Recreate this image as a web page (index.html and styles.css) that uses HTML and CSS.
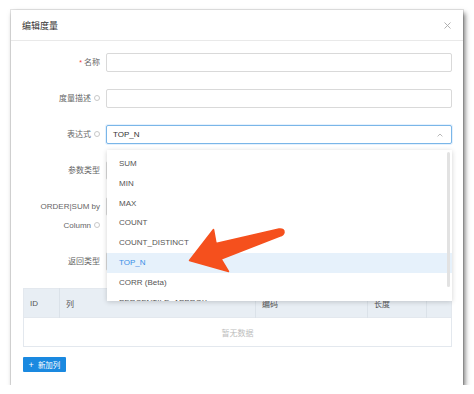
FILE: index.html
```html
<!DOCTYPE html>
<html lang="zh">
<head>
    <meta charset="UTF-8">
    <title>编辑度量</title>
    <link rel="stylesheet" href="styles.css">
</head>
<body>
    <div class="modal">
        <div class="modal-header">
            <span class="modal-title">编辑度量</span>
            <svg class="close-icon" width="7" height="7" viewBox="0 0 7 7">
                <path d="M0.5 0.5 L6.5 6.5 M6.5 0.5 L0.5 6.5" stroke="#a8a8a8" stroke-width="0.9"/>
            </svg>
        </div>
        <div class="modal-body">
            <div class="form-item">
                <div class="form-label"><span class="required">*</span>名称</div>
                <input type="text" class="form-input">
            </div>
            <div class="form-item">
                <div class="form-label">度量描述<i class="help-icon"></i></div>
                <input type="text" class="form-input">
            </div>
            <div class="form-item">
                <div class="form-label">表达式<i class="help-icon"></i></div>
                <div class="select-wrap">
                    <div class="form-select is-open">
                        <span>TOP_N</span>
                        <svg class="caret" width="6" height="4" viewBox="0 0 6 4">
                            <path d="M0.6 3.4 L3 1 L5.4 3.4" fill="none" stroke="#b0b0b0" stroke-width="0.9"/>
                        </svg>
                    </div>
                    <div class="select-dropdown">
                        <ul class="option-list">
                            <li>SUM</li>
                            <li>MIN</li>
                            <li>MAX</li>
                            <li>COUNT</li>
                            <li>COUNT_DISTINCT</li>
                            <li class="active">TOP_N</li>
                            <li>CORR (Beta)</li>
                            <li>PERCENTILE_APPROX</li>
                        </ul>
                        <div class="scroll-thumb"></div>
                    </div>
                </div>
            </div>
            <div class="form-item">
                <div class="form-label">参数类型</div>
                <div class="form-select"></div>
            </div>
            <div class="form-item">
                <div class="form-label">ORDER|SUM by<br>Column<i class="help-icon"></i></div>
                <div class="form-select"></div>
            </div>
            <div class="form-item">
                <div class="form-label">返回类型</div>
                <div class="form-select"></div>
            </div>

            <table class="column-table">
                <thead>
                    <tr>
                        <th class="col-id">ID</th>
                        <th class="col-name">列</th>
                        <th class="col-code">编码</th>
                        <th class="col-len">长度</th>
                        <th class="col-op"></th>
                    </tr>
                </thead>
                <tbody>
                    <tr>
                        <td colspan="5" class="empty-cell">暂无数据</td>
                    </tr>
                </tbody>
            </table>

            <button type="button" class="add-btn"><span class="plus">+</span>新加列</button>
        </div>
    </div>

    <!-- annotation arrow drawn over the screenshot -->
    <svg class="pointer-arrow" width="474" height="394" viewBox="0 0 474 394">
        <path d="M189.5 260.5 L213.5 229.5 L216 243.5 L279 229 Q284.5 228.5 284 232.5 Q283.5 235 280 236 L221 259 L228.5 271.5 Z"
              fill="#f5501d" stroke="#f5501d" stroke-width="1.5" stroke-linejoin="round"/>
    </svg>
</body>
</html>
```

FILE: styles.css
```css
body {
    margin: 0;
    background: #fff;
    font-family: "Liberation Sans", "Noto Sans CJK SC", sans-serif;
    font-size: 8px;
    color: #666;
}
.modal {
    margin: 10px 0 0 11px;
    width: 452px;
    background: #fff;
    box-shadow: 0 0 0 1px rgba(0, 0, 0, 0.1), 2px 3px 5px rgba(0, 0, 0, 0.55);
}
.modal-header {
    height: 30px;
    padding: 0 11px;
    border-bottom: 1px solid #e9e9e9;
    display: flex;
    align-items: center;
    justify-content: space-between;
}
.modal-title {
    font-size: 9px;
    color: #333;
}
.close-icon {
    margin-right: 1px;
}
.modal-body {
    position: relative;
    padding: 12px 11px 13px 12px;
}
.form-item {
    display: grid;
    grid-template-columns: 77px 1fr;
    column-gap: 6px;
    margin-bottom: 17px;
}
.form-label {
    text-align: right;
    line-height: 19px;
    color: #666;
}
.required {
    color: #f04134;
    font-size: 7px;
    margin-right: 2px;
    vertical-align: top;
}
.help-icon {
    display: inline-block;
    width: 4px;
    height: 4px;
    margin-left: 3px;
    border: 1px solid #c8c8c8;
    border-radius: 50%;
    vertical-align: middle;
    position: relative;
    top: -1px;
}
.form-input,
.form-select {
    box-sizing: border-box;
    width: 100%;
    height: 19px;
    margin: 0;
    border: 1px solid #d9d9d9;
    border-radius: 2px;
    background: #fff;
    font: inherit;
    color: #333;
}
.select-wrap {
    position: relative;
}
.form-select {
    display: flex;
    align-items: center;
    justify-content: space-between;
    padding: 0 8px 0 6px;
}
.form-select.is-open {
    border-color: #7ab6e8;
    box-shadow: 0 0 0 1px rgba(45, 140, 240, 0.12);
}
.select-dropdown {
    position: absolute;
    top: 25px;
    left: 1px;
    right: 0;
    height: 151px;
    overflow: hidden;
    background: #fff;
    box-shadow: 0 1px 5px rgba(0, 0, 0, 0.18);
    z-index: 2;
}
.option-list {
    list-style: none;
    margin: 0;
    padding: 4px 0 0;
}
.option-list li {
    height: 19.8px;
    line-height: 19.8px;
    padding-left: 12px;
    color: #555;
}
.option-list li.active {
    background: #e6f1fb;
    color: #3a8ee6;
}
.scroll-thumb {
    position: absolute;
    top: 2px;
    right: 2px;
    width: 3px;
    height: 135px;
    border-radius: 2px;
    background: #e2e2e2;
}
.column-table {
    width: 100%;
    border-collapse: collapse;
    border: 1px solid #e3e8ee;
    margin-top: 0;
}
.column-table th {
    height: 28px;
    padding: 0 0 0 6px;
    background: #e8eef4;
    border-right: 1px solid #dbe2e9;
    text-align: left;
    font-weight: normal;
    color: #555;
}
.column-table th:last-child {
    border-right: none;
}
.col-id { width: 29px; }
.col-name { width: 189px; }
.col-code { width: 105px; }
.col-len { width: 52px; }
.empty-cell {
    height: 26px;
    text-align: center;
    color: #bdbdbd;
    border-top: 1px solid #e3e8ee;
}
.add-btn {
    margin-top: 10px;
    height: 15px;
    width: 43px;
    padding: 0;
    border: none;
    border-radius: 1px;
    background: #1a89e0;
    color: #fff;
    font: inherit;
    font-size: 7.5px;
    display: flex;
    align-items: center;
    justify-content: center;
}
.plus {
    margin-right: 4px;
    font-size: 9px;
}
.pointer-arrow {
    position: absolute;
    top: 0;
    left: 0;
    z-index: 5;
    pointer-events: none;
}
```
